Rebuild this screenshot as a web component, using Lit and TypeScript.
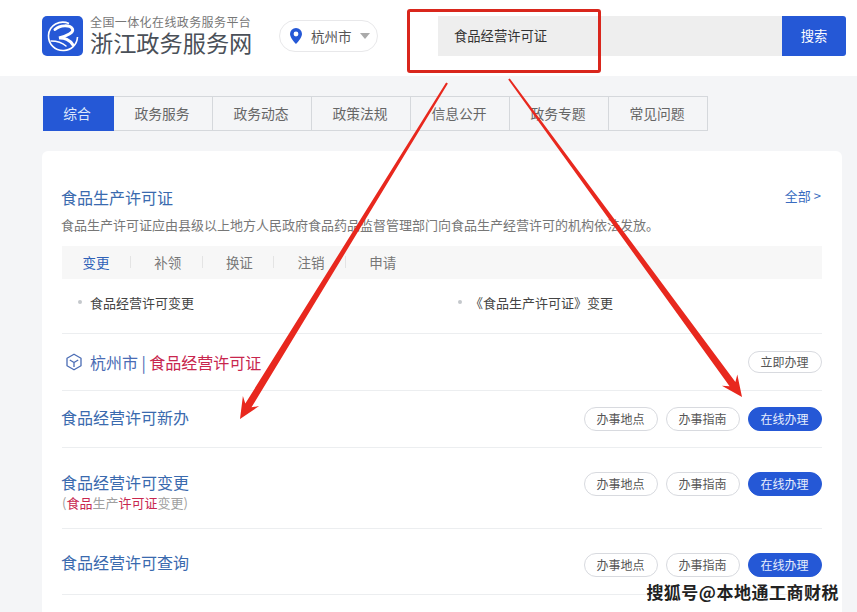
import { LitElement, html, css, svg } from 'lit';
import { customElement } from 'lit/decorators.js';

const TABS = ['综合', '政务服务', '政务动态', '政策法规', '信息公开', '政务专题', '常见问题'];
const SUB_TABS = ['变更', '补领', '换证', '注销', '申请'];

// tapered annotation arrow, from thin tail to a barbed head
function arrow(x1: number, y1: number, x2: number, y2: number) {
  const len = Math.hypot(x2 - x1, y2 - y1);
  const ux = (x2 - x1) / len;
  const uy = (y2 - y1) / len;
  const nx = -uy;
  const ny = ux;
  const at = (back: number, side: number) =>
    `${(x2 - ux * back + nx * side).toFixed(1)},${(y2 - uy * back + ny * side).toFixed(1)}`;
  const points = [
    at(len, 1),
    at(16, 3.6),
    at(21, 9.5),
    `${x2},${y2}`,
    at(21, -9.5),
    at(16, -3.6),
    at(len, -1),
  ].join(' ');
  return svg`<polygon points=${points} fill="#e8281e"></polygon>`;
}

@customElement('app-root')
export class AppRoot extends LitElement {
  static styles = css`
    :host {
      display: block;
      position: relative;
      width: 857px;
      height: 612px;
      overflow: hidden;
      background: #f4f5f7;
      font-family: 'Noto Sans CJK SC', 'Liberation Sans', sans-serif;
      color: #555;
    }

    .header {
      display: flex;
      align-items: center;
      height: 76px;
      padding: 0 11px 4px 42px;
      box-sizing: border-box;
      background: #fff;
    }
    .logo {
      width: 41px;
      height: 40px;
      flex: none;
    }
    .brand {
      margin-left: 7px;
      width: 171px;
      color: #4a5058;
    }
    .brand-sub {
      font-size: 12px;
      line-height: 14px;
      letter-spacing: 0.4px;
      color: #777;
    }
    .brand-main {
      font-size: 23.2px;
      line-height: 26px;
      margin-bottom: 2px;
    }
    .city {
      display: flex;
      align-items: center;
      width: 99px;
      height: 32px;
      margin-left: 18px;
      padding-left: 10px;
      box-sizing: border-box;
      border: 1px solid #e8e8ea;
      border-radius: 16px;
      font-size: 13.5px;
      color: #555;
    }
    .city svg {
      flex: none;
      margin-right: 9px;
    }
    .caret {
      width: 0;
      height: 0;
      margin-left: 8px;
      border-left: 5px solid transparent;
      border-right: 5px solid transparent;
      border-top: 6px solid #aaa;
    }
    .search {
      display: flex;
      margin-left: auto;
      height: 40px;
    }
    .search-input {
      width: 344px;
      padding-left: 16px;
      box-sizing: border-box;
      background: #eee;
      font-size: 13.3px;
      line-height: 39px;
      color: #333;
    }
    .search-btn {
      width: 64px;
      background: #2558d6;
      border-radius: 0 3px 3px 0;
      font-size: 13.3px;
      line-height: 39px;
      text-align: center;
      color: #fff;
    }

    .tabs {
      display: flex;
      width: fit-content;
      margin: 20px 0 20px 43px;
    }
    .tab {
      width: 99px;
      height: 35px;
      padding-right: 2px;
      box-sizing: border-box;
      border: 1px solid #d5d8dc;
      border-left: none;
      font-size: 13.8px;
      line-height: 33px;
      text-align: center;
      color: #666;
    }
    .tab.on {
      width: 71px;
      background: #2558d6;
      border-color: #2558d6;
      color: #dfe8fb;
    }

    .card {
      margin: 0 15px 0 42px;
      padding: 36px 20px 0;
      height: 500px;
      box-sizing: border-box;
      background: #fff;
      border-radius: 6px 6px 0 0;
    }
    .head {
      display: flex;
      justify-content: space-between;
      align-items: center;
      height: 20px;
    }
    .head-title {
      font-size: 16px;
      margin-left: -1px;
      color: #3a6aae;
    }
    .all {
      font-size: 13px;
      color: #3a6cc0;
      margin: -4px 1px 0 0;
    }
    .desc {
      margin-top: 7px;
      font-size: 13px;
      line-height: 22px;
      margin-left: -1px;
      color: #777;
      white-space: nowrap;
    }
    .subs {
      display: flex;
      align-items: center;
      height: 33px;
      margin-top: 10px;
      padding: 0 0 2px 20px;
      box-sizing: border-box;
      background: #f7f7f7;
      font-size: 13.5px;
      color: #777;
    }
    .sub {
      width: 28px;
      white-space: nowrap;
      text-align: center;
    }
    .sub.on {
      color: #2f62b8;
    }
    .sep {
      width: 1px;
      height: 12px;
      margin: 0 22.7px 0 20px;
      background: #e4e4e4;
    }
    .links {
      display: grid;
      grid-template-columns: 380px 380px;
      height: 55px;
      padding-bottom: 8px;
      box-sizing: border-box;
      align-items: center;
      border-bottom: 1px solid #eceef0;
      font-size: 13px;
      color: #444;
    }
    .link {
      display: flex;
      align-items: center;
      padding-left: 16px;
    }
    .dot {
      width: 4px;
      height: 4px;
      margin-right: 8px;
      border-radius: 50%;
      background: #c4c8cc;
    }

    .row {
      display: flex;
      justify-content: space-between;
      align-items: flex-start;
      box-sizing: border-box;
      border-bottom: 1px solid #eceef0;
    }
    .row-city {
      height: 57px;
      align-items: center;
      padding-left: 3px;
    }
    .row-a {
      height: 57px;
      padding-top: 16px;
    }
    .row-b {
      height: 81px;
      padding-top: 24px;
    }
    .row-c {
      height: 66px;
      padding-top: 24px;
    }
    .row-c .name {
      margin-top: -1px;
    }
    .city-title {
      display: flex;
      align-items: center;
      gap: 3.5px;
      margin-top: -1px;
      font-size: 16px;
      color: #4a6cb4;
    }
    .city-title svg {
      margin-right: 3.5px;
    }
    .red {
      color: #c8264e;
    }
    .name {
      font-size: 16px;
      line-height: 20px;
      margin-left: -1px;
      color: #3a6aae;
    }
    .note {
      font-size: 13px;
      line-height: 16px;
      margin-top: 3px;
      color: #a0a0a0;
    }
    .actions {
      display: flex;
      gap: 8px;
    }
    .pill {
      width: 74px;
      height: 24px;
      padding-right: 1px;
      box-sizing: border-box;
      border: 1px solid #d8dadf;
      border-radius: 12px;
      font-size: 12px;
      line-height: 21px;
      text-align: center;
      color: #555;
    }
    .pill.small {
      height: 22px;
      border-radius: 11px;
      line-height: 19px;
    }
    .pill.primary {
      background: #2558d6;
      border-color: #2558d6;
      color: #e6edfc;
    }

    /* annotations drawn over the page */
    .marks {
      position: absolute;
      inset: 0;
      pointer-events: none;
    }
    .box {
      position: absolute;
      left: 407px;
      top: 9px;
      width: 194px;
      height: 64px;
      box-sizing: border-box;
      border: 3px solid #d9261c;
      border-radius: 3px;
    }
    .watermark {
      position: absolute;
      right: 18px;
      bottom: 9px;
      font-size: 17px;
      line-height: 22px;
      font-weight: 700;
      letter-spacing: 0.5px;
      color: #222;
      text-shadow: 1px 1px 0 #fff, -1px -1px 0 #fff, 1px -1px 0 #fff, -1px 1px 0 #fff;
    }
  `;

  private actions() {
    return html`<div class="actions">
      <div class="pill">办事地点</div>
      <div class="pill">办事指南</div>
      <div class="pill primary">在线办理</div>
    </div>`;
  }

  render() {
    return html`
      <div class="header">
        <svg class="logo" viewBox="0 0 41 40">
          <rect width="41" height="40" rx="5" fill="#2558d6"></rect>
          <path d="M27 7.500C18 3.500 7 9 6.500 19.500 6.200 28 13 35 22 34.500 29 34 35 29 35.500 21" fill="none" stroke="#fff" stroke-width="1.600"></path>
          <path d="M13 13.500C18 9 28 8.500 30.500 13 32 16.500 25 20 17 22 22 21.500 28 24 31 29" fill="none" stroke="#fff" stroke-width="3" stroke-linecap="round"></path>
          <path d="M9 25C14 25 19 25.500 24 30" fill="none" stroke="#fff" stroke-width="1.500" stroke-linecap="round"></path>
        </svg>
        <div class="brand">
          <div class="brand-sub">全国一体化在线政务服务平台</div>
          <div class="brand-main">浙江政务服务网</div>
        </div>
        <div class="city">
          <svg width="12" height="16" viewBox="0 0 12 16">
            <path fill-rule="evenodd" d="M6 0a6 6 0 0 1 6 6c0 4-6 10-6 10S0 10 0 6a6 6 0 0 1 6-6zm0 3.600a2.400 2.400 0 1 0 0 4.800 2.400 2.400 0 0 0 0-4.800z" fill="#2558d6"></path>
          </svg>
          杭州市
          <span class="caret"></span>
        </div>
        <div class="search">
          <div class="search-input">食品经营许可证</div>
          <div class="search-btn">搜索</div>
        </div>
      </div>

      <div class="tabs">
        ${TABS.map((t, i) => html`<div class="tab ${i === 0 ? 'on' : ''}">${t}</div>`)}
      </div>

      <div class="card">
        <div class="head">
          <div class="head-title">食品生产许可证</div>
          <div class="all">全部 &gt;</div>
        </div>
        <div class="desc">食品生产许可证应由县级以上地方人民政府食品药品监督管理部门向食品生产经营许可的机构依法发放。</div>
        <div class="subs">
          ${SUB_TABS.map(
            (t, i) => html`<div class="sub ${i === 0 ? 'on' : ''}">${t}</div>${i < SUB_TABS.length - 1
                ? html`<div class="sep"></div>`
                : ''}`
          )}
        </div>
        <div class="links">
          <div class="link"><span class="dot"></span>食品经营许可变更</div>
          <div class="link"><span class="dot"></span>《食品生产许可证》变更</div>
        </div>

        <div class="row row-city">
          <div class="city-title">
            <svg width="18" height="18" viewBox="0 0 18 18" fill="none" stroke="#4a6cb4" stroke-width="1.300" stroke-linejoin="round">
              <path d="M9 1.200l7 4v7.600l-7 4-7-4V5.200z"></path>
              <path d="M4.800 7l4.200 2.500L13.200 7M9 9.500v4.500"></path>
            </svg>
            <span>杭州市</span><span>|</span><span class="red">食品经营许可证</span>
          </div>
          <div class="pill small">立即办理</div>
        </div>
        <div class="row row-a">
          <div class="name">食品经营许可新办</div>
          ${this.actions()}
        </div>
        <div class="row row-b">
          <div>
            <div class="name">食品经营许可变更</div>
            <div class="note">(<span class="red">食品</span>生产<span class="red">许可证</span>变更)</div>
          </div>
          ${this.actions()}
        </div>
        <div class="row row-c">
          <div class="name">食品经营许可查询</div>
          ${this.actions()}
        </div>
      </div>

      <div class="marks">
        <div class="box"></div>
        <svg width="857" height="612">
          ${arrow(447, 83, 240, 419)}
          ${arrow(509, 79, 742, 397)}
        </svg>
        <div class="watermark">搜狐号@本地通工商财税</div>
      </div>
    `;
  }
}
